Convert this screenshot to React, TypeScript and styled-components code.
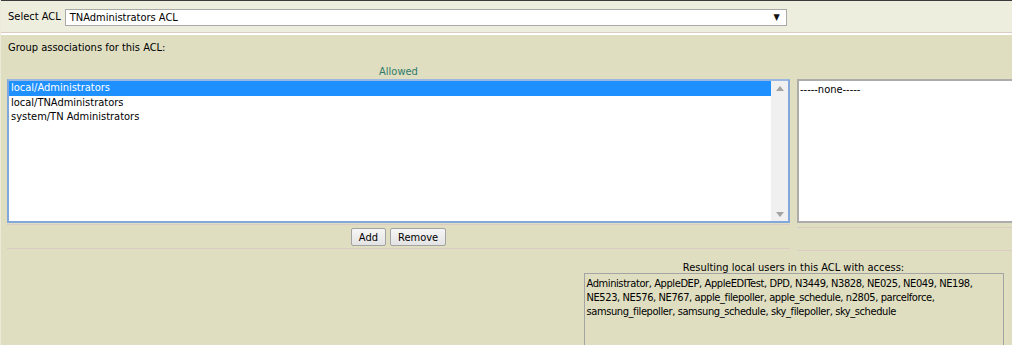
import styled, { createGlobalStyle } from "styled-components";

const GlobalStyle = createGlobalStyle`
  html, body {
    margin: 0;
    padding: 0;
    background: #dfdec0;
    overflow: hidden;
  }
  body {
    font-family: "DejaVu Sans Condensed", "Liberation Sans", sans-serif;
    font-size: 11px;
    color: #000;
  }
`;

const Page = styled.div`
  width: 1012px;
  height: 345px;
  overflow: hidden;
  border-left: 1px solid #ecebd9;
  box-sizing: border-box;
`;

const TopBar = styled.div`
  display: flex;
  align-items: center;
  gap: 4px;
  height: 31px;
  padding-left: 7px;
  background: #eeeedf;
  border-top: 1px solid #3b3b3b;
  border-bottom: 1px solid #dccbc2;
  box-shadow: 0 2px 0 #ffffff;
  margin-bottom: 2px;
`;

const Label = styled.span`
  white-space: nowrap;
`;

const SelectBox = styled.div`
  position: relative;
  width: 716px;
  height: 15px;
  line-height: 15px;
  padding-left: 4px;
  background: #fff;
  border: 1px solid #a9a9a9;
  margin-top: 2px;
`;

const Arrow = styled.span`
  position: absolute;
  right: 6px;
  top: 0;
  font-size: 9px;
  color: #111;
`;

const Main = styled.div`
  padding: 6px 0 0 6px;
`;

const Heading = styled.div`
  height: 14px;
  line-height: 14px;
  margin-left: 1px;
`;

const Columns = styled.div`
  display: flex;
  gap: 7px;
  margin-top: 10px;
`;

const LeftCol = styled.div`
  width: 783px;
  flex-shrink: 0;
  display: flex;
  flex-direction: column;
  align-items: stretch;
`;

const RightCol = styled.div`
  flex: 1;
  min-width: 0;
  display: flex;
  flex-direction: column;
  padding-top: 14px;
`;

const Caption = styled.div`
  text-align: center;
  color: #2f7a6b;
  height: 14px;
  line-height: 14px;
`;

const ListBox = styled.div`
  display: flex;
  height: 140px;
  background: #fff;
  border: 2px solid #82a7dc;
  border-top-color: #9bb8e3;
`;

const Options = styled.div`
  flex: 1;
`;

const Option = styled.div<{ $selected?: boolean }>`
  height: 14.5px;
  line-height: 14px;
  padding-left: 2px;
  background: ${(p) => (p.$selected ? "#1e90ff" : "transparent")};
  color: ${(p) => (p.$selected ? "#fff" : "#000")};
`;

const ScrollBar = styled.div`
  width: 17px;
  background: #f0f0f0;
  display: flex;
  flex-direction: column;
  justify-content: space-between;
  align-items: center;
  padding: 5px 0 4px;
`;

const Rule = styled.div<{ $gap?: number }>`
  height: 1px;
  background: #dccac4;
  margin-top: ${(p) => p.$gap ?? 0}px;
`;

const ButtonRow = styled.div`
  display: flex;
  justify-content: center;
  gap: 4px;
  margin-top: 3px;
`;

const Button = styled.button`
  height: 18px;
  padding: 0 7px;
  font: inherit;
  font-size: 11px;
  color: #000;
  border: 1px solid #a3a3a3;
  border-radius: 2px;
  background: linear-gradient(#f6f6f6, #e3e3e3);
`;

const NoneBox = styled.div`
  width: 230px;
  height: 144px;
  background: #fff;
  border: 2px solid #acacac;
  padding: 2px 1px;
  box-sizing: border-box;
  line-height: 14px;
`;

const ResultCell = styled.div`
  width: 437px;
  margin-left: auto;
  margin-top: 12px;
  text-align: center;
`;

const ResultLabel = styled.div`
  line-height: 10px;
`;

const ResultBox = styled.div`
  width: 420px;
  height: 90px;
  margin: 0 auto;
  text-align: left;
  border: 1px solid #a4a4a4;
  padding: 3px 2px;
  box-sizing: border-box;
  line-height: 14px;
  letter-spacing: -0.4px;
`;

const Tri = ({ up }: { up?: boolean }) => (
  <svg width="8" height="5" viewBox="0 0 8 5">
    <path d={up ? "M0 5 L4 0 L8 5 Z" : "M0 0 L8 0 L4 5 Z"} fill="#a3a3a3" />
  </svg>
);

export default function App() {
  return (
    <Page>
      <GlobalStyle />
      <TopBar>
        <Label>Select ACL</Label>
        <SelectBox>
          TNAdministrators ACL
          <Arrow>▼</Arrow>
        </SelectBox>
      </TopBar>
      <Main>
        <Heading>Group associations for this ACL:</Heading>
        <Columns>
          <LeftCol>
            <Caption>Allowed</Caption>
            <ListBox>
              <Options>
                <Option $selected>local/Administrators</Option>
                <Option>local/TNAdministrators</Option>
                <Option>system/TN Administrators</Option>
              </Options>
              <ScrollBar>
                <Tri up />
                <Tri />
              </ScrollBar>
            </ListBox>
            <Rule $gap={1} />
            <ButtonRow>
              <Button>Add</Button>
              <Button>Remove</Button>
            </ButtonRow>
            <Rule $gap={2} />
          </LeftCol>
          <RightCol>
            <NoneBox>-----none-----</NoneBox>
            <Rule $gap={4} />
            <Rule $gap={22} />
          </RightCol>
        </Columns>
        <ResultCell>
          <ResultLabel>Resulting local users in this ACL with access:</ResultLabel>
          <ResultBox>
            Administrator, AppleDEP, AppleEDITest, DPD, N3449, N3828, NE025, NE049, NE198, NE523, NE576, NE767,
            apple_filepoller, apple_schedule, n2805, parcelforce, samsung_filepoller, samsung_schedule,
            sky_filepoller, sky_schedule
          </ResultBox>
        </ResultCell>
      </Main>
    </Page>
  );
}
